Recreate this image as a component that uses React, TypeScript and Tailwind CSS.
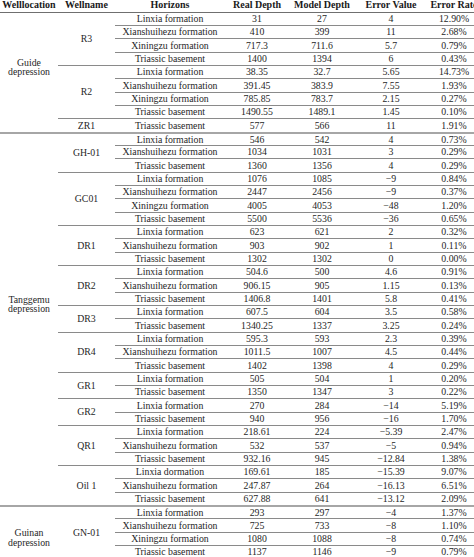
import React from "react";

type Row = [string, string, string, string, string];
type Well = { name: string; rows: Row[] };
type Group = { name: string[]; shift: string; wells: Well[] };

const L = "Linxia formation";
const X = "Xianshuihezu formation";
const Z = "Xiningzu formation";
const T = "Triassic basement";

const groups: Group[] = [
  {
    name: ["Guide", "depression"],
    shift: "pb-[10px]",
    wells: [
      {
        name: "R3",
        rows: [
          [L, "31", "27", "4", "12.90%"],
          [X, "410", "399", "11", "2.68%"],
          [Z, "717.3", "711.6", "5.7", "0.79%"],
          [T, "1400", "1394", "6", "0.43%"],
        ],
      },
      {
        name: "R2",
        rows: [
          [L, "38.35", "32.7", "5.65", "14.73%"],
          [X, "391.45", "383.9", "7.55", "1.93%"],
          [Z, "785.85", "783.7", "2.15", "0.27%"],
          [T, "1490.55", "1489.1", "1.45", "0.10%"],
        ],
      },
      { name: "ZR1", rows: [[T, "577", "566", "11", "1.91%"]] },
    ],
  },
  {
    name: ["Tanggemu", "depression"],
    shift: "pb-[30px]",
    wells: [
      {
        name: "GH-01",
        rows: [
          [L, "546", "542", "4", "0.73%"],
          [X, "1034", "1031", "3", "0.29%"],
          [T, "1360", "1356", "4", "0.29%"],
        ],
      },
      {
        name: "GC01",
        rows: [
          [L, "1076", "1085", "\u22129", "0.84%"],
          [X, "2447", "2456", "\u22129", "0.37%"],
          [Z, "4005", "4053", "\u221248", "1.20%"],
          [T, "5500", "5536", "\u221236", "0.65%"],
        ],
      },
      {
        name: "DR1",
        rows: [
          [L, "623", "621", "2", "0.32%"],
          [X, "903", "902", "1", "0.11%"],
          [T, "1302", "1302", "0", "0.00%"],
        ],
      },
      {
        name: "DR2",
        rows: [
          [L, "504.6", "500", "4.6", "0.91%"],
          [X, "906.15", "905", "1.15", "0.13%"],
          [T, "1406.8", "1401", "5.8", "0.41%"],
        ],
      },
      {
        name: "DR3",
        rows: [
          [L, "607.5", "604", "3.5", "0.58%"],
          [T, "1340.25", "1337", "3.25", "0.24%"],
        ],
      },
      {
        name: "DR4",
        rows: [
          [L, "595.3", "593", "2.3", "0.39%"],
          [X, "1011.5", "1007", "4.5", "0.44%"],
          [T, "1402", "1398", "4", "0.29%"],
        ],
      },
      {
        name: "GR1",
        rows: [
          [L, "505", "504", "1", "0.20%"],
          [T, "1350", "1347", "3", "0.22%"],
        ],
      },
      {
        name: "GR2",
        rows: [
          [L, "270", "284", "\u221214", "5.19%"],
          [T, "940", "956", "\u221216", "1.70%"],
        ],
      },
      {
        name: "QR1",
        rows: [
          [L, "218.61", "224", "\u22125.39", "2.47%"],
          [X, "532", "537", "\u22125", "0.94%"],
          [T, "932.16", "945", "\u221212.84", "1.38%"],
        ],
      },
      {
        name: "Oil 1",
        rows: [
          ["Linxia dormation", "169.61", "185", "\u221215.39", "9.07%"],
          [X, "247.87", "264", "\u221216.13", "6.51%"],
          [T, "627.88", "641", "\u221213.12", "2.09%"],
        ],
      },
    ],
  },
  {
    name: ["Guinan", "depression"],
    shift: "pt-[10px]",
    wells: [
      {
        name: "GN-01",
        rows: [
          [L, "293", "297", "\u22124", "1.37%"],
          [X, "725", "733", "\u22128", "1.10%"],
          [Z, "1080", "1088", "\u22128", "0.74%"],
          [T, "1137", "1146", "\u22129", "0.79%"],
        ],
      },
    ],
  },
];

function lineClass(gi: number, wi: number, ri: number, level: "group" | "well" | "row") {
  const firstRowOfWell = ri === 0;
  const firstWellOfGroup = wi === 0;
  if (gi === 0 && firstWellOfGroup && firstRowOfWell) return "border-t border-t-[#6f6f6f]";
  if (firstRowOfWell && firstWellOfGroup) return "border-t-2 border-t-[#a6a6a6]";
  if (level === "group") return "";
  if (firstRowOfWell) return "border-t border-t-[#8a8a8a]";
  if (level === "well") return "";
  return "border-t border-t-[#8a8a8a]";
}

export default function App() {
  const body: React.ReactNode[] = [];
  groups.forEach((g, gi) => {
    const groupRows = g.wells.reduce((s, w) => s + w.rows.length, 0);
    g.wells.forEach((w, wi) => {
      w.rows.forEach((r, ri) => {
        const rowLine = lineClass(gi, wi, ri, "row");
        body.push(
          <tr key={`${gi}-${wi}-${ri}`} className="h-[13.33px]">
            {wi === 0 && ri === 0 && (
              <td
                rowSpan={groupRows}
                className={`p-0 text-center align-middle leading-[9.5px] ${lineClass(gi, wi, ri, "group")}`}
              >
                <div className={g.shift}>
                  {g.name.map((n) => (
                    <div key={n}>{n}</div>
                  ))}
                </div>
              </td>
            )}
            {ri === 0 && (
              <td
                rowSpan={w.rows.length}
                className={`p-0 text-center align-middle leading-none ${lineClass(gi, wi, ri, "well")}`}
              >
                {w.name}
              </td>
            )}
            {r.map((c, ci) => (
              <td key={ci} className={`p-0 text-center align-middle leading-none whitespace-nowrap ${rowLine}`}>
                {c}
              </td>
            ))}
          </tr>
        );
      });
    });
  });

  return (
    <div className="w-[474px] h-[557px] overflow-hidden bg-white">
      <table className="mt-[-1.5px] w-[481px] table-fixed border-separate border-spacing-0 font-['Liberation_Serif',serif] text-[9.8px] text-[#262626]">
        <colgroup>
          <col className="w-[58px]" />
          <col className="w-[57px]" />
          <col className="w-[110px]" />
          <col className="w-[64px]" />
          <col className="w-[66px]" />
          <col className="w-[72px]" />
          <col className="w-[54px]" />
        </colgroup>
        <thead>
          <tr className="h-[13.33px] text-[10px] font-bold text-[#1a1a1a]">
            <th className="p-0 text-center align-middle leading-none whitespace-nowrap">Welllocation</th>
            <th className="p-0 text-center align-middle leading-none whitespace-nowrap">Wellname</th>
            <th className="p-0 text-center align-middle leading-none whitespace-nowrap">Horizons</th>
            <th className="p-0 text-center align-middle leading-none whitespace-nowrap">Real Depth</th>
            <th className="p-0 text-center align-middle leading-none whitespace-nowrap">Model Depth</th>
            <th className="p-0 text-center align-middle leading-none whitespace-nowrap">Error Value</th>
            <th className="p-0 text-center align-middle leading-none whitespace-nowrap">Error Rate</th>
          </tr>
        </thead>
        <tbody>{body}</tbody>
      </table>
    </div>
  );
}
